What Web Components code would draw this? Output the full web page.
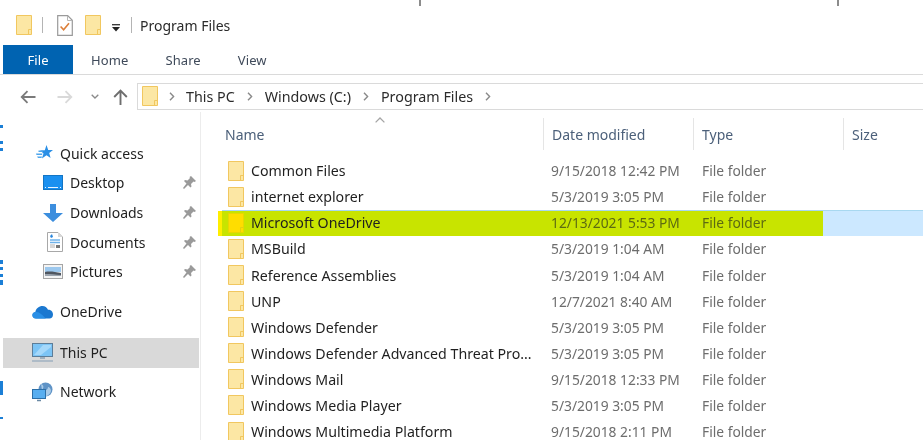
<!DOCTYPE html>
<html>
<head>
<meta charset="utf-8">
<title>Program Files</title>
<style>
    html, body { margin: 0; height: 440px; overflow: hidden; background: #fff; }
    body { font: 14px "Noto Sans", "Liberation Sans", sans-serif; color: #1f1f1f; }
</style>
</head>
<body>
<explorer-window></explorer-window>
<script>
// all the little pictures, keyed by the name attribute of <win-icon>
const ICONS = {
    folder: `<svg viewBox="0 0 16 20" width="16" height="20">
        <path d="M.5.5h15v19H.5z" fill="#fce7a4" stroke="#f1c75f"/>
        <path d="M12.5 19.5v-5h3" fill="none" stroke="#f1c75f"/></svg>`,
    folderHot: `<svg viewBox="0 0 16 20" width="16" height="20">
        <path d="M.5.5h15v19H.5z" fill="#ffdd00" stroke="#e8d800"/>
        <path d="M12.5 19.5v-5h3" fill="none" stroke="#e6cf10"/></svg>`,
    check: `<svg viewBox="0 0 16 21" width="16" height="21">
        <path d="M.7.7h10l4.6 4.6v15H.7z" fill="#fff" stroke="#9a9a9a" stroke-width="1.2"/>
        <path d="M10.5 1v4.5h4.6" fill="none" stroke="#b5b5b5"/>
        <path d="M3.6 11.5l3 3.2 5.4-6.4" fill="none" stroke="#dc7f3a" stroke-width="1.6"/></svg>`,
    star: `<svg viewBox="0 0 17 16" width="17" height="16">
        <path d="M10.500 0l1.700 5 4.800.100-3.800 3 1.400 5-4.100-2.900-4.600 3.300 1.600-5.100-3.300-3 4.600-.200z" fill="#2a8fe6"/>
        <path d="M2.500 5.500h5l-1 1.500h-4zM0 8.500h6.500l-.500 1.500H.5zM1 11.500h5l-.500 1.500H2z" fill="#4ea6ec"/></svg>`,
    desktop: `<svg viewBox="0 0 20 15" width="20" height="15">
        <rect x=".5" y=".5" width="19" height="14" fill="#1a90f0" stroke="#1375c4"/>
        <path d="M2 12.500h1M5 12.500h10M17 12.500h1" stroke="#e8f4ff"/></svg>`,
    download: `<svg viewBox="0 0 20 18" width="20" height="18">
        <path d="M7 0h6v9h7l-10 9L0 9h7z" fill="#3c8ede"/></svg>`,
    document: `<svg viewBox="0 0 16 20" width="16" height="20">
        <path d="M.5.5h10.500l4.500 4.500v14.500H.5z" fill="#fff" stroke="#a8a8a8"/>
        <path d="M11 1v4h4.500z" fill="#d8d8d8"/>
        <path d="M3 4l2-2 1 3-2 1z" fill="#2a86dc"/>
        <path d="M3 8h10M3 10.500h10" stroke="#6fb2ea" stroke-width="1.300"/>
        <path d="M3 13h5M3 15h5" stroke="#b0b0b0"/>
        <rect x="9" y="13" width="4" height="3" fill="#777"/></svg>`,
    pictures: `<svg viewBox="0 0 20 15" width="20" height="15">
        <rect x=".5" y=".5" width="19" height="14" fill="#f4f4f4" stroke="#a5a5a5"/>
        <rect x="2" y="3" width="16" height="5" fill="#9cc8ee"/>
        <path d="M2 8c5-1 10 0 16 1v3H2z" fill="#4f5660"/>
        <path d="M2 10c6 0 10 .500 16 1v1H2z" fill="#9aa3ad"/></svg>`,
    cloud: `<svg viewBox="0 0 21 14" width="21" height="14">
        <path d="M4 13.500c-4.500 0-4.800-6-.700-6.500C4 3.500 7 1 10.500 1c2.500 0 4.500 1.500 5.500 3.800 3-.300 5 2 5 4.700 0 2.500-1.500 4-3.500 4z" fill="#1b78d0"/>
        <path d="M4 13.500c-4.500 0-4.800-6-.700-6.500 3-.500 5 1 7 3l3.500 3.500z" fill="#2a8fe6"/></svg>`,
    pc: `<svg viewBox="0 0 21 19" width="21" height="19">
        <rect x=".5" y=".5" width="20" height="13" fill="#7cc4f5" stroke="#5d7d98"/>
        <path d="M2 12L11 2h8v2L9 12z" fill="#a5d8fa"/>
        <path d="M8 15h5" stroke="#8ba0b3" stroke-width="1.500"/>
        <path d="M0 18h21" stroke="#9fb0c0" stroke-width="1.500"/></svg>`,
    network: `<svg viewBox="0 0 21 20" width="21" height="20">
        <circle cx="13.500" cy="7.500" r="7" fill="#5f93c6"/>
        <path d="M9 2c3 1 3 4 1 6 3 1 6 0 6-3 1.500 0 3 2 3 4-1 4-5 6-8 5.500z" fill="#a9cbe8"/>
        <rect x=".5" y="7.500" width="13" height="9" fill="#58aef0" stroke="#2c6fa8"/>
        <path d="M5 18.500h4" stroke="#6b8aa5" stroke-width="1.500"/></svg>`,
    pin: `<svg viewBox="0 0 13 13" width="13" height="13">
        <path d="M8 0l5 5-1.500 1-1-.500-2.500 2.500.5 2.500-1 1-2.500-2.500L1 13 0 12l3.500-4.500L1 5l1-1 2.500.5L7 2l-.500-1z" fill="#9a9a9a"/></svg>`,
    back: `<svg viewBox="0 0 16 14" width="16" height="14">
        <path d="M15.500 7H2M7.500 1.200L1.700 7l5.800 5.800" fill="none" stroke="#7a7a7a" stroke-width="1.800"/></svg>`,
    forward: `<svg viewBox="0 0 16 14" width="16" height="14">
        <path d="M.5 7H14M8.500 1.200L14.300 7l-5.800 5.800" fill="none" stroke="#d9d9d9" stroke-width="1.800"/></svg>`,
    up: `<svg viewBox="0 0 15 16" width="15" height="16">
        <path d="M7.500 16V2M1.200 8l6.300-6.300L13.800 8" fill="none" stroke="#6e6e6e" stroke-width="1.900"/></svg>`,
    chev: `<svg viewBox="0 0 8 5" width="8" height="5">
        <path d="M.7.700l3.300 3.300L7.300.7" fill="none" stroke="#8a8a8a" stroke-width="1.300"/></svg>`,
    crumb: `<svg viewBox="0 0 6 9" width="6" height="9">
        <path d="M1 .8l3.600 3.700L1 8.200" fill="none" stroke="#8a8a8a" stroke-width="1.400"/></svg>`,
    drop: `<svg viewBox="0 0 8 8" width="8" height="8">
        <path d="M0 .7h8" stroke="#333" stroke-width="1.300"/><path d="M0 3h8L4 7.500z" fill="#222"/></svg>`,
    sort: `<svg viewBox="0 0 10 6" width="10" height="6">
        <path d="M.6 5.400L5 1l4.400 4.400" fill="none" stroke="#a5a5a5" stroke-width="1.300"/></svg>`
};

class WinIcon extends HTMLElement {
    connectedCallback () {
        if (this.shadowRoot) return;
        const root = this.attachShadow({ mode: 'open' });
        root.innerHTML = `<style>:host { display: inline-flex; flex: none; } svg { display: block; }</style>`
            + ICONS[this.getAttribute('name')];
    }
}

const titleTemplate = document.createElement('template');
titleTemplate.innerHTML = `
    <style>
        :host { display: flex; align-items: center; height: 45px; padding: 5px 0 0 16px; box-sizing: border-box; }
        .sep { width: 1px; height: 16px; background: #b4b4b4; }
        .title { margin-left: 8px; font-size: 14px; color: #2b2b2b; }
    </style>
    <win-icon name="folder"></win-icon>
    <span class="sep" style="margin-left:10px"></span>
    <win-icon name="check" style="margin-left:14px"></win-icon>
    <win-icon name="folder" style="margin-left:12px"></win-icon>
    <win-icon name="drop" style="margin-left:11px;margin-top:6px"></win-icon>
    <span class="sep" style="margin-left:11px"></span>
    <span class="title"><slot></slot></span>
`;
class TitleBar extends HTMLElement {
    constructor () {
        super();
        this.attachShadow({ mode: 'open' }).appendChild(titleTemplate.content.cloneNode(true));
    }
}

const tabsTemplate = document.createElement('template');
tabsTemplate.innerHTML = `
    <style>
        :host { display: flex; height: 30px; padding-left: 3px; border-bottom: 1px solid #dadada; box-sizing: border-box; font-size: 13px; letter-spacing: .1px; color: #3f4a5a; }
        span { display: flex; align-items: center; }
        .file { width: 70px; justify-content: center; background: #0063b1; color: #fff; margin-right: 18px; }
        .tab { margin-right: 37px; }
    </style>
    <span class="file">File</span>
    <span class="tab">Home</span>
    <span class="tab">Share</span>
    <span class="tab">View</span>
`;
class RibbonTabs extends HTMLElement {
    constructor () {
        super();
        this.attachShadow({ mode: 'open' }).appendChild(tabsTemplate.content.cloneNode(true));
    }
}

const addressTemplate = document.createElement('template');
addressTemplate.innerHTML = `
    <style>
        :host { display: flex; align-items: center; height: 27px; margin-top: 8px; padding-left: 20px; font-size: 14.300px; color: #2b2b2b; }
        .box { display: flex; align-items: center; flex: 1; align-self: stretch; margin-left: 9px; padding: 0 0 1px 4px; border: solid #dadada; border-width: 1px 0 1px 1px; }
        .crumb { margin: 0 12px; }
        .crumb.first { margin: 0 11px; }
    </style>
    <win-icon name="back"></win-icon>
    <win-icon name="forward" style="margin-left:21px"></win-icon>
    <win-icon name="chev" style="margin-left:18px"></win-icon>
    <win-icon name="up" style="margin-left:14px"></win-icon>
    <div class="box">
        <win-icon name="folder"></win-icon>
        <win-icon class="crumb first" name="crumb"></win-icon><span>This PC</span>
        <win-icon class="crumb" name="crumb"></win-icon><span>Windows (C:)</span>
        <win-icon class="crumb" name="crumb"></win-icon><span>Program Files</span>
        <win-icon class="crumb" name="crumb"></win-icon>
    </div>
`;
class AddressBar extends HTMLElement {
    constructor () {
        super();
        this.attachShadow({ mode: 'open' }).appendChild(addressTemplate.content.cloneNode(true));
    }
}

// one line of the left pane: icon, label, maybe a pin
class NavItem extends HTMLElement {
    connectedCallback () {
        if (this.shadowRoot) return;
        const sub = this.hasAttribute('sub');
        const root = this.attachShadow({ mode: 'open' });
        root.innerHTML = `
            <style>
                :host { display: flex; align-items: center; flex: none; height: 30px; margin-left: 3px; width: 196px; font-size: 14px; color: #1f1f1f; position: relative; }
                :host([selected]) { background: #d9d9d9; }
                .icon { display: flex; justify-content: flex-end; width: ${sub ? 20 : 21}px; margin-left: ${sub ? 40 : 29}px; margin-right: 7px; }
                .pin { margin-left: auto; margin-right: 3px; }
            </style>
            <span class="icon"><win-icon name="${this.getAttribute('icon')}"></win-icon></span>
            <span><slot></slot></span>
            ${this.hasAttribute('pin') ? '<win-icon class="pin" name="pin"></win-icon>' : ''}
        `;
    }
}

const navTemplate = document.createElement('template');
navTemplate.innerHTML = `
    <style>
        :host { display: flex; flex-direction: column; flex: none; width: 201px; padding-top: 26px; box-sizing: border-box; height: 100%; border-right: 1px solid #ececec; position: relative; }
        .edge { position: absolute; left: 0; width: 3px; background: #1c7fd6; }
        nav-item[tight] { height: 29.700px; }
        .gap { flex: none; }
    </style>
    <nav-item icon="star">Quick access</nav-item>
    <nav-item tight sub pin icon="desktop">Desktop</nav-item>
    <nav-item tight sub pin icon="download">Downloads</nav-item>
    <nav-item tight sub pin icon="document">Documents</nav-item>
    <nav-item tight sub pin icon="pictures">Pictures</nav-item>
    <div class="gap" style="height:10px"></div>
    <nav-item icon="cloud">OneDrive</nav-item>
    <div class="gap" style="height:11px"></div>
    <nav-item selected icon="pc">This PC</nav-item>
    <div class="gap" style="height:9px"></div>
    <nav-item icon="network">Network</nav-item>
    <i class="edge" style="top:13px;height:3px"></i>
    <i class="edge" style="top:29px;height:3px"></i>
    <i class="edge" style="top:36px;height:3px"></i>
    <i class="edge" style="top:148px;height:4px"></i>
    <i class="edge" style="top:155px;height:3px"></i>
    <i class="edge" style="top:162px;height:3px"></i>
    <i class="edge" style="top:168px;height:5px"></i>
    <i class="edge" style="top:269px;height:14px"></i>
    <i class="edge" style="top:305px;height:2px"></i>
`;
class NavPane extends HTMLElement {
    constructor () {
        super();
        this.attachShadow({ mode: 'open' }).appendChild(navTemplate.content.cloneNode(true));
    }
}

class FileRow extends HTMLElement {
    connectedCallback () {
        if (this.shadowRoot) return;
        const hot = this.hasAttribute('hot');
        const root = this.attachShadow({ mode: 'open' });
        root.innerHTML = `
            <style>
                :host { display: flex; align-items: center; flex: none; height: 26.100px; box-sizing: border-box; padding-left: 6px; margin-left: 21px; position: relative; font-size: 14.200px; }
                :host([hot]) { background: linear-gradient(to right, #c8e400 601px, #cce8ff 601px); box-shadow: inset 0 1px 0 #a8d8f0; }
                :host([hot])::before { content: ''; position: absolute; left: -4px; top: 1px; bottom: 0; width: 4px; background: #ffee00; }
                .name { width: 300px; margin-left: 7px; box-sizing: border-box; white-space: nowrap; color: #1f1f1f; }
                .date { width: 151px; font-size: 13.800px; color: ${hot ? '#5d6a12' : '#6d6d6d'}; }
                .type { font-size: 13.800px; color: ${hot ? '#5d6a12' : '#6d6d6d'}; }
            </style>
            <win-icon name="${hot ? 'folderHot' : 'folder'}"></win-icon>
            <span class="name"><slot></slot></span>
            <span class="date">${this.getAttribute('date')}</span>
            <span class="type">File folder</span>
        `;
    }
}

const listTemplate = document.createElement('template');
listTemplate.innerHTML = `
    <style>
        :host { display: flex; flex-direction: column; flex: 1; min-width: 0; position: relative; }
        .head { display: flex; height: 32px; margin: 6px 0 7.600px; font-size: 14px; color: #4c607a; flex: none; }
        .col { display: flex; align-items: center; flex: none; width: 150px; border-right: 1px solid #e5e5e5; box-sizing: border-box; padding-left: 8px; }
        .col.name { width: 343px; padding-left: 24px; }
        .col.last { border: 0; }
        .sort { position: absolute; left: 174px; top: 5px; }
    </style>
    <div class="head">
        <div class="col name">Name</div>
        <div class="col">Date modified</div>
        <div class="col">Type</div>
        <div class="col last">Size</div>
    </div>
    <win-icon class="sort" name="sort"></win-icon>
    <slot></slot>
`;
class FileList extends HTMLElement {
    constructor () {
        super();
        this.attachShadow({ mode: 'open' }).appendChild(listTemplate.content.cloneNode(true));
    }
}

const windowTemplate = document.createElement('template');
windowTemplate.innerHTML = `
    <style>
        :host { display: block; height: 440px; overflow: hidden; position: relative; filter: blur(.35px); }
        .tick { position: absolute; top: 0; width: 2px; height: 6px; background: #8c8c8c; }
        .main { display: flex; height: 328px; margin-top: 2px; }
    </style>
    <i class="tick" style="left:419px"></i>
    <i class="tick" style="left:837px"></i>
    <title-bar>Program Files</title-bar>
    <ribbon-tabs></ribbon-tabs>
    <address-bar></address-bar>
    <div class="main">
        <nav-pane></nav-pane>
        <file-list>
            <file-row date="9/15/2018 12:42 PM">Common Files</file-row>
            <file-row date="5/3/2019 3:05 PM">internet explorer</file-row>
            <file-row hot date="12/13/2021 5:53 PM">Microsoft OneDrive</file-row>
            <file-row date="5/3/2019 1:04 AM">MSBuild</file-row>
            <file-row date="5/3/2019 1:04 AM">Reference Assemblies</file-row>
            <file-row date="12/7/2021 8:40 AM">UNP</file-row>
            <file-row date="5/3/2019 3:05 PM">Windows Defender</file-row>
            <file-row date="5/3/2019 3:05 PM">Windows Defender Advanced Threat Pro...</file-row>
            <file-row date="9/15/2018 12:33 PM">Windows Mail</file-row>
            <file-row date="5/3/2019 3:05 PM">Windows Media Player</file-row>
            <file-row date="9/15/2018 2:11 PM">Windows Multimedia Platform</file-row>
        </file-list>
    </div>
`;
class ExplorerWindow extends HTMLElement {
    constructor () {
        super();
        this.attachShadow({ mode: 'open' }).appendChild(windowTemplate.content.cloneNode(true));
    }
}

customElements.define('win-icon', WinIcon);
customElements.define('title-bar', TitleBar);
customElements.define('ribbon-tabs', RibbonTabs);
customElements.define('address-bar', AddressBar);
customElements.define('nav-item', NavItem);
customElements.define('nav-pane', NavPane);
customElements.define('file-row', FileRow);
customElements.define('file-list', FileList);
customElements.define('explorer-window', ExplorerWindow);
</script>
</body>
</html>
